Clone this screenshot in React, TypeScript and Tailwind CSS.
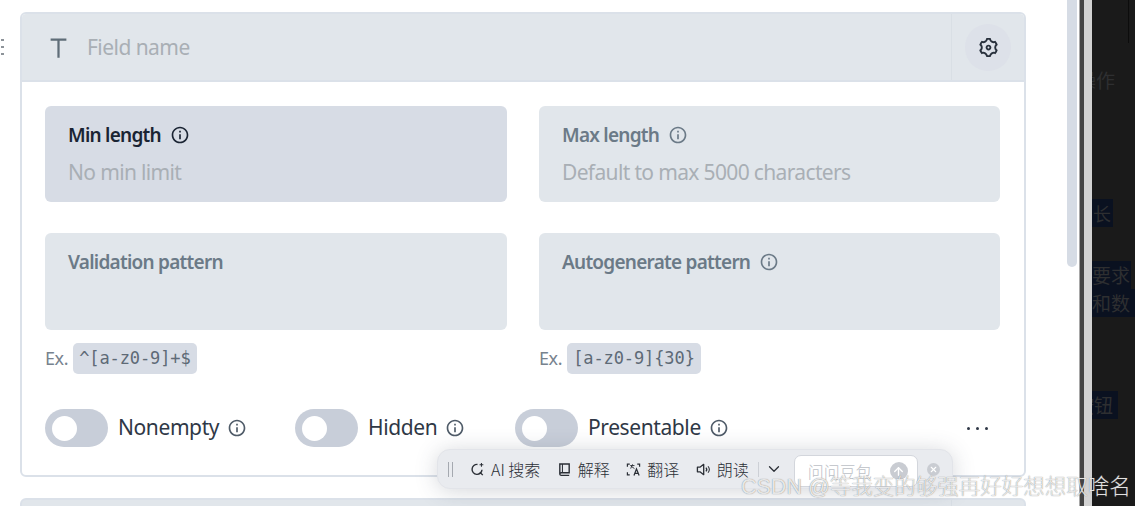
import { RiSettings3Line, RiInformationLine, RiText } from "react-icons/ri";
import { ArrowUp, ChevronDown, X } from "lucide-react";

const sans = "font-['Noto_Sans','Open_Sans',sans-serif]";

function Field({ label, hint, active, info = true }: { label: string; hint?: string; active?: boolean; info?: boolean }) {
  return (
    <div className={`h-full rounded-[6px] px-[23px] pt-[15px] ${active ? "bg-[#d7dce5]" : "bg-[#e1e6eb]"}`}>
      <div className={`flex h-[28px] items-center gap-[9px] text-[19px] font-semibold tracking-[-0.75px] ${active ? "text-[#1a2433]" : "text-[#6b7a87]"}`}>
        <span>{label}</span>
        {info && <RiInformationLine className="h-[20px] w-[20px] shrink-0" />}
      </div>
      {hint && <div className="mt-[9px] text-[21px] leading-[28px] tracking-[-0.65px] text-[#a9afb5]">{hint}</div>}
    </div>
  );
}

function Toggle({ label, className }: { label: string; className: string }) {
  return (
    <div className={`flex items-center ${className}`}>
      <div className="flex h-[38px] w-[63px] shrink-0 items-center rounded-full bg-[#c8ced9] pl-[7px]">
        <div className="h-[25px] w-[25px] rounded-full bg-white" />
      </div>
      <span className="ml-[10px] text-[21px] tracking-[-0.4px] text-[#2f3846]">{label}</span>
      <RiInformationLine className="ml-[8px] h-[20px] w-[20px] shrink-0 text-[#4f5b68]" />
    </div>
  );
}

function Example({ code }: { code: string }) {
  return (
    <div className="mt-[13px] flex h-[31px] items-center gap-[5px]">
      <span className="text-[18px] tracking-[-0.4px] text-[#77828e]">Ex.</span>
      <code className="flex h-[31px] items-center rounded-[5px] bg-[#d7dce5] px-[6px] font-['DejaVu_Sans_Mono',monospace] text-[17px] tracking-[-0.1px] text-[#5e6a76]">
        {code}
      </code>
    </div>
  );
}

function Spark() {
  return (
    <svg viewBox="0 0 16 16" className="h-[15px] w-[15px]" fill="none" stroke="currentColor" strokeWidth="1.5">
      <path d="M8 2.600A5.300 5.300 0 1 0 12.800 8.200" />
      <path d="m10.600 11 3 3" />
      <path d="M12.200 1v4M10.200 3h4" strokeWidth="1.100" />
    </svg>
  );
}

function BookIcon() {
  return (
    <svg viewBox="0 0 16 16" className="h-[15px] w-[15px]" fill="none" stroke="currentColor" strokeWidth="1.500">
      <path d="M3 13V2.200h10v9.300H4.500A1.500 1.500 0 0 0 3 13a1.500 1.500 0 0 0 1.500 1.300H13" />
      <path d="M5.800 2.200v9.300" strokeWidth="1.100" />
    </svg>
  );
}

function TranslateIcon() {
  return (
    <svg viewBox="0 0 16 16" className="h-[15px] w-[15px]" fill="none" stroke="currentColor" strokeWidth="1.300">
      <path d="M1.500 5V2.200H4M12 2.200h2.500V5M1.500 11v2.800H4" />
      <path d="M7 2.500 5 7M4.500 3.800H9M5.500 4.500 9 7" strokeWidth="1" />
      <path d="m8.500 14.500 2.700-7 2.800 7M9.500 12.200h3.400" />
    </svg>
  );
}

function SpeakerIcon() {
  return (
    <svg viewBox="0 0 16 16" className="h-[15px] w-[15px]" fill="none" stroke="currentColor" strokeWidth="1.400">
      <path d="M1.500 5.500v5h2.700l4 3V2.500l-4 3z" strokeLinejoin="round" />
      <path d="M10.600 6a3 3 0 0 1 0 4" />
      <path d="M12.800 4.500a5.500 5.500 0 0 1 0 7" strokeWidth="1.100" />
    </svg>
  );
}

function Tool({ icon, label }: { icon: React.ReactNode; label: string }) {
  return (
    <div className="flex items-center gap-[6px] whitespace-nowrap">
      {icon}
      <span>{label}</span>
    </div>
  );
}

function Toolbar() {
  return (
    <div className="absolute left-[437px] top-[449px] flex h-[40px] w-[516px] items-center rounded-[13px] border border-[#e2e4e9] bg-[#e9ebef] pl-[10px] font-['Noto_Sans_CJK_SC','Noto_Sans',sans-serif] text-[16px] font-light text-[#2b2f36] shadow-[0_2px_22px_rgba(60,70,85,0.22)]">
      <div className="mr-[17px] flex h-[15px] gap-[3px]">
        <div className="w-px bg-[#a5a9b0]" />
        <div className="w-px bg-[#a5a9b0]" />
      </div>
      <div className="flex items-center gap-[16.5px]">
        <Tool icon={<Spark />} label="AI 搜索" />
        <Tool icon={<BookIcon />} label="解释" />
        <Tool icon={<TranslateIcon />} label="翻译" />
        <Tool icon={<SpeakerIcon />} label="朗读" />
      </div>
      <div className="ml-[9px] h-[15px] w-px bg-[#cdd0d6]" />
      <ChevronDown className="ml-[6px] h-[18px] w-[18px]" strokeWidth={1.7} />
      <div className="ml-[11px] mt-[5px] flex h-[32px] w-[124px] items-center justify-between self-start rounded-[7px] border border-[#d3d6dc] bg-white pl-[13px] pr-[9px] text-[#bcc0c6]">
        <span>问问豆包</span>
        <div className="flex h-[18px] w-[18px] items-center justify-center rounded-full bg-[#c9ccd2]">
          <ArrowUp className="h-[13px] w-[13px] text-white" strokeWidth={2.5} />
        </div>
      </div>
      <div className="ml-[9px] flex h-[13px] w-[13px] items-center justify-center rounded-full bg-[#c9ccd2]">
        <X className="h-[9px] w-[9px] text-white" strokeWidth={3} />
      </div>
    </div>
  );
}

function DarkPane() {
  const cell = "flex h-[28px] items-center justify-end overflow-hidden whitespace-nowrap text-[#2e2f31]";
  return (
    <div className="relative w-[43px] shrink-0 overflow-hidden bg-[#1a1a1a] font-['Noto_Sans_CJK_SC',sans-serif]">
      <div className="absolute right-[6px] top-0 h-[43px] w-px bg-[#0c0c0c]" />
      <div className={`mt-[66px] w-[23px] text-[19px] ${cell}`}>操作</div>
      <div className={`mt-[105px] w-[21px] bg-[#0a1120] pr-[2px] text-[18px] ${cell}`}>长</div>
      <div className={`mt-[34px] w-[39px] bg-[#0a1120] pr-[1px] text-[19px] ${cell}`}>要求</div>
      <div className={`w-[43px] bg-[#0a1120] pr-[5px] text-[19px] ${cell}`}>和数</div>
      <div className={`mt-[74px] w-[26px] bg-[#0a1120] pr-[5px] text-[19px] ${cell}`}>按钮</div>
    </div>
  );
}

export default function App() {
  return (
    <div className={`relative flex h-[506px] w-[1135px] overflow-hidden bg-white ${sans}`}>
      <div className="flex w-[1067px] shrink-0 pt-[12px]">
        <div className="flex w-[20px] shrink-0 flex-col gap-[5px] pl-[1px] pt-[27px]">
          <div className="h-[2px] w-[3px] bg-[#8d9399]" />
          <div className="h-[2px] w-[3px] bg-[#8d9399]" />
          <div className="h-[2px] w-[3px] bg-[#8d9399]" />
        </div>
        <div className="w-[1006px] shrink-0">
          <div className="h-[465px] rounded-[6px] border-2 border-[#dbe1e9]">
            <div className="flex h-[68px] rounded-t-[4px] border-b-2 border-[#dbe1e9] bg-[#e1e6eb]">
              <div className="flex flex-1 items-center pl-[23px]">
                <RiText className="h-[27px] w-[27px] text-[#5f6d78]" />
                <span className="ml-[15px] mt-[1px] text-[21px] tracking-[-0.55px] text-[#a9afb5]">Field name</span>
              </div>
              <div className="flex w-[73px] items-center justify-center border-l border-[#d9dfe5]">
                <div className="flex h-[47px] w-[46px] items-center justify-center rounded-full bg-[#dde1e9]">
                  <RiSettings3Line className="h-[23px] w-[23px] text-[#28303c]" />
                </div>
              </div>
            </div>
            <div className="px-[23px] pt-[24px]">
              <div className="grid grid-cols-[462px_461px] gap-x-[32px]">
                <div className="h-[96px]"><Field label="Min length" hint="No min limit" active /></div>
                <div className="h-[96px]"><Field label="Max length" hint="Default to max 5000 characters" /></div>
                <div className="mt-[31px]">
                  <div className="h-[97px]"><Field label="Validation pattern" info={false} /></div>
                  <Example code="^[a-z0-9]+$" />
                </div>
                <div className="mt-[31px]">
                  <div className="h-[97px]"><Field label="Autogenerate pattern" /></div>
                  <Example code="[a-z0-9]{30}" />
                </div>
              </div>
              <div className="mt-[35px] flex h-[38px] items-center">
                <Toggle label="Nonempty" className="w-[250px]" />
                <Toggle label="Hidden" className="w-[220px]" />
                <Toggle label="Presentable" className="w-[452px]" />
                <div className="flex gap-[6px]">
                  <div className="h-[3px] w-[3px] rounded-full bg-[#2f3846]" />
                  <div className="h-[3px] w-[3px] rounded-full bg-[#2f3846]" />
                  <div className="h-[3px] w-[3px] rounded-full bg-[#2f3846]" />
                </div>
              </div>
            </div>
          </div>
          <div className="mt-[21px] flex h-[30px] rounded-t-[6px] border-2 border-[#dbe1e9] bg-[#e1e6eb]">
            <div className="flex-1" />
            <div className="w-[73px] border-l border-[#d9dfe5]" />
          </div>
        </div>
      </div>
      <div className="flex w-[12px] shrink-0 items-start">
        <div className="h-[267px] w-[10px] rounded-b-[5px] bg-[#d6dce5]" />
      </div>
      <div className="w-[1px] shrink-0 bg-[#a8a8a8]" />
      <div className="w-[4px] shrink-0 bg-[#444444]" />
      <div className="w-[8px] shrink-0 bg-[#d2d2d2]" />
      <DarkPane />
      <Toolbar />
      <div className="absolute left-[741px] top-[472px] whitespace-nowrap font-['Liberation_Sans','Noto_Sans_CJK_SC',sans-serif] text-[21.5px] font-light leading-[30px] text-[#ffffffd0] [text-shadow:0_0_1px_#707070]">
        CSDN @等我变的够强再好好想想取啥名
      </div>
    </div>
  );
}
